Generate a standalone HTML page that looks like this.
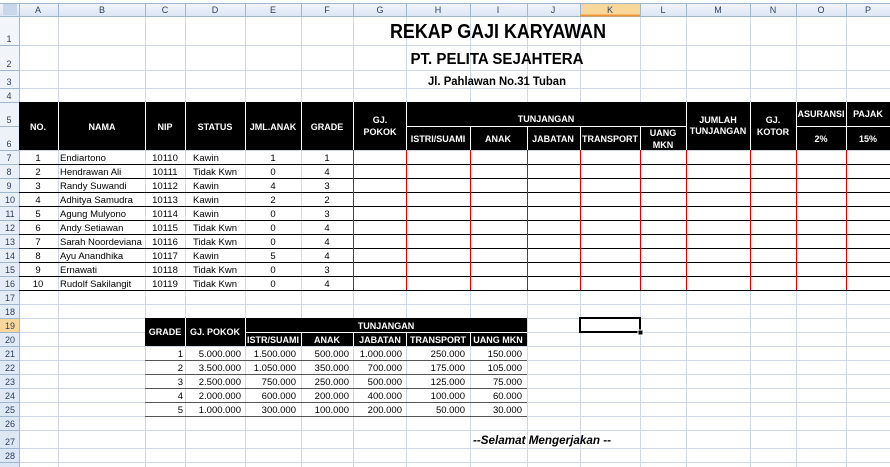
<!DOCTYPE html>
<html><head><meta charset="utf-8"><style>
html,body{margin:0;padding:0;background:#fff;width:890px;height:467px;overflow:hidden}
svg{display:block}
text{font-family:"Liberation Sans",sans-serif}
.h{font-size:9px;fill:#000;text-anchor:middle}
.d{font-size:9.5px;fill:#000}
.w{font-size:9px;fill:#fff;font-weight:bold;text-anchor:middle}
.c{text-anchor:middle}
.r{text-anchor:end}
</style></head><body>
<svg width="890" height="467" viewBox="0 0 890 467">
<defs><linearGradient id="hg" x1="0" y1="0" x2="0" y2="1"><stop offset="0" stop-color="#f3f6fb"/><stop offset="1" stop-color="#dce6f4"/></linearGradient></defs>
<rect x="0" y="0" width="890" height="467" fill="#fff"/>
<!-- gridlines -->
<g stroke="#d0d7e5" stroke-width="1">
<path d="M58.5 16V467M145.5 16V467M185.5 16V467M245.5 16V467M301.5 16V467M353.5 16V467M406.5 16V467M470.5 16V467M527.5 16V467M580.5 16V467M640.5 16V467M686.5 16V467M750.5 16V467M796.5 16V467M846.5 16V467"/>
<path d="M19 45.5H890M19 70.5H890M19 88.5H890M19 102.5H890M19 126.5H890M19 150.5H890M19 304.5H890M19 318.5H890M19 332.5H890M19 346.5H890M19 360.5H890M19 374.5H890M19 388.5H890M19 402.5H890M19 416.5H890M19 430.5H890M19 448.5H890M19 462.5H890"/>
</g>
<!-- headers -->
<rect x="0" y="3" width="890" height="13" fill="url(#hg)"/>
<rect x="0" y="16" width="19" height="451" fill="url(#hg)"/>
<rect x="580" y="3" width="60" height="13" fill="#f8d89a"/>
<rect x="0" y="318" width="19" height="14" fill="#f8d89a"/>
<g stroke="#9eb6ce" stroke-width="1">
<path d="M0 3.5H890M0 16.5H890M19.5 3V467"/>
<path d="M58.5 3V16M145.5 3V16M185.5 3V16M245.5 3V16M301.5 3V16M353.5 3V16M406.5 3V16M470.5 3V16M527.5 3V16M580.5 3V16M640.5 3V16M686.5 3V16M750.5 3V16M796.5 3V16M846.5 3V16"/>
<path d="M0 45.5H19M0 70.5H19M0 88.5H19M0 102.5H19M0 126.5H19M0 150.5H19M0 164.5H19M0 178.5H19M0 192.5H19M0 206.5H19M0 220.5H19M0 234.5H19M0 248.5H19M0 262.5H19M0 276.5H19M0 290.5H19M0 304.5H19M0 318.5H19M0 332.5H19M0 346.5H19M0 360.5H19M0 374.5H19M0 388.5H19M0 402.5H19M0 416.5H19M0 430.5H19M0 448.5H19M0 462.5H19"/>
</g>
<rect x="580" y="14.5" width="60" height="2" fill="#f29436"/>
<rect x="3" y="4" width="14" height="11" fill="#c9d7ea"/>
<g class="h" style="fill:#2c3e5a">
<text x="38" y="13">A</text><text x="102" y="13">B</text><text x="165" y="13">C</text><text x="215" y="13">D</text><text x="273" y="13">E</text><text x="327" y="13">F</text><text x="380" y="13">G</text><text x="438" y="13">H</text><text x="498" y="13">I</text><text x="553" y="13">J</text><text x="610" y="13">K</text><text x="663" y="13">L</text><text x="718" y="13">M</text><text x="773" y="13">N</text><text x="821" y="13">O</text><text x="868" y="13">P</text>
</g>
<g class="h" style="fill:#2c3e5a">
<text x="9" y="42">1</text><text x="9" y="67">2</text><text x="9" y="85">3</text><text x="9" y="99">4</text><text x="9" y="123">5</text><text x="9" y="147">6</text>
<text x="9" y="161">7</text><text x="9" y="175">8</text><text x="9" y="189">9</text><text x="10" y="203">10</text><text x="10" y="217">11</text><text x="10" y="231">12</text><text x="10" y="245">13</text><text x="10" y="259">14</text><text x="10" y="273">15</text><text x="10" y="287">16</text><text x="10" y="301">17</text><text x="10" y="315">18</text><text x="10" y="329">19</text><text x="10" y="343">20</text><text x="10" y="357">21</text><text x="10" y="371">22</text><text x="10" y="385">23</text><text x="10" y="399">24</text><text x="10" y="413">25</text><text x="10" y="427">26</text><text x="10" y="445">27</text><text x="10" y="459">28</text>
</g>
<!-- titles -->
<text x="498" y="38" class="c" font-weight="bold" font-size="20" textLength="216" lengthAdjust="spacingAndGlyphs">REKAP GAJI KARYAWAN</text>
<text x="497" y="64" class="c" font-weight="bold" font-size="16" textLength="173" lengthAdjust="spacingAndGlyphs">PT. PELITA SEJAHTERA</text>
<text x="497" y="85" class="c" font-weight="bold" font-size="11.5" textLength="138" lengthAdjust="spacingAndGlyphs">Jl. Pahlawan No.31 Tuban</text>
<!-- upper header -->
<rect x="19" y="102" width="871" height="48" fill="#000"/>
<g stroke="#fff" stroke-width="1">
<path d="M58.5 102V150M145.5 102V150M185.5 102V150M245.5 102V150M301.5 102V150M353.5 102V150M406.5 102V150M470.5 126V150M527.5 126V150M580.5 126V150M640.5 126V150M686.5 102V150M750.5 102V150M796.5 102V150M846.5 102V150"/>
<path d="M406 126.5H686M796 126.5H890"/>
</g>
<g class="w">
<text x="38" y="130">NO.</text><text x="102" y="130">NAMA</text><text x="165" y="130">NIP</text><text x="215" y="130">STATUS</text><text x="273" y="130">JML.ANAK</text><text x="327" y="130">GRADE</text>
<text x="380" y="123">GJ.</text><text x="380" y="135">POKOK</text>
<text x="546" y="122">TUNJANGAN</text>
<text x="438" y="142">ISTRI/SUAMI</text><text x="498" y="142">ANAK</text><text x="553" y="142">JABATAN</text><text x="610" y="142">TRANSPORT</text><text x="663" y="136">UANG</text><text x="663" y="148">MKN</text>
<text x="718" y="123">JUMLAH</text><text x="718" y="134">TUNJANGAN</text>
<text x="773" y="123">GJ.</text><text x="773" y="135">KOTOR</text>
<text x="821" y="117">ASURANSI</text><text x="821" y="142">2%</text>
<text x="868" y="117">PAJAK</text><text x="868" y="142">15%</text>
</g>
<!-- upper data lines -->
<g stroke="#000" stroke-width="1">
<path d="M19 164.5H890M19 178.5H890M19 192.5H890M19 206.5H890M19 220.5H890M19 234.5H890M19 248.5H890M19 262.5H890M19 276.5H890M19 290.5H890"/>
</g>
<g stroke="#e00000" stroke-width="1">
<path d="M353.5 150V290M406.5 150V290M470.5 150V290M527.5 150V290M580.5 150V290M640.5 150V290M686.5 150V290M750.5 150V290M796.5 150V290M846.5 150V290"/>
</g>
<g class="d">
<g class="c"><text x="38" y="161">1</text><text x="38" y="175">2</text><text x="38" y="189">3</text><text x="38" y="203">4</text><text x="38" y="217">5</text><text x="38" y="231">6</text><text x="38" y="245">7</text><text x="38" y="259">8</text><text x="38" y="273">9</text><text x="38" y="287">10</text></g>
<text x="60" y="161">Endiartono</text><text x="60" y="175">Hendrawan Ali</text><text x="60" y="189">Randy Suwandi</text><text x="60" y="203">Adhitya Samudra</text><text x="60" y="217">Agung Mulyono</text><text x="60" y="231">Andy Setiawan</text><text x="60" y="245">Sarah Noordeviana</text><text x="60" y="259">Ayu Anandhika</text><text x="60" y="273">Ernawati</text><text x="60" y="287">Rudolf Sakilangit</text>
<g class="c"><text x="165" y="161">10110</text><text x="165" y="175">10111</text><text x="165" y="189">10112</text><text x="165" y="203">10113</text><text x="165" y="217">10114</text><text x="165" y="231">10115</text><text x="165" y="245">10116</text><text x="165" y="259">10117</text><text x="165" y="273">10118</text><text x="165" y="287">10119</text></g>
<text x="193" y="161">Kawin</text><text x="193" y="175">Tidak Kwn</text><text x="193" y="189">Kawin</text><text x="193" y="203">Kawin</text><text x="193" y="217">Kawin</text><text x="193" y="231">Tidak Kwn</text><text x="193" y="245">Tidak Kwn</text><text x="193" y="259">Kawin</text><text x="193" y="273">Tidak Kwn</text><text x="193" y="287">Tidak Kwn</text>
<g class="c"><text x="273" y="161">1</text><text x="273" y="175">0</text><text x="273" y="189">4</text><text x="273" y="203">2</text><text x="273" y="217">0</text><text x="273" y="231">0</text><text x="273" y="245">0</text><text x="273" y="259">5</text><text x="273" y="273">0</text><text x="273" y="287">0</text></g>
<g class="c"><text x="327" y="161">1</text><text x="327" y="175">4</text><text x="327" y="189">3</text><text x="327" y="203">2</text><text x="327" y="217">3</text><text x="327" y="231">4</text><text x="327" y="245">4</text><text x="327" y="259">4</text><text x="327" y="273">3</text><text x="327" y="287">4</text></g>
</g>
<!-- lower table -->
<rect x="145" y="318" width="382" height="28" fill="#000"/>
<g stroke="#fff" stroke-width="1"><path d="M185.5 318V346M245.5 318V346M301.5 332V346M353.5 332V346M406.5 332V346M470.5 332V346M245 332.5H527"/></g>
<g class="w">
<text x="165" y="335">GRADE</text><text x="215" y="335">GJ. POKOK</text><text x="386" y="329">TUNJANGAN</text>
<text x="273" y="343">ISTR/SUAMI</text><text x="327" y="343">ANAK</text><text x="380" y="343">JABATAN</text><text x="438" y="343">TRANSPORT</text><text x="498" y="343">UANG MKN</text>
</g>
<g stroke="#555" stroke-width="1"><path d="M145 360.5H527M145 374.5H527M145 388.5H527M145 402.5H527M145 416.5H527"/></g>
<g class="d r">
<text x="183" y="357">1</text><text x="183" y="371">2</text><text x="183" y="385">3</text><text x="183" y="399">4</text><text x="183" y="413">5</text>
<text x="241" y="357">5.000.000</text><text x="241" y="371">3.500.000</text><text x="241" y="385">2.500.000</text><text x="241" y="399">2.000.000</text><text x="241" y="413">1.000.000</text>
<text x="296" y="357">1.500.000</text><text x="296" y="371">1.050.000</text><text x="296" y="385">750.000</text><text x="296" y="399">600.000</text><text x="296" y="413">300.000</text>
<text x="349" y="357">500.000</text><text x="349" y="371">350.000</text><text x="349" y="385">250.000</text><text x="349" y="399">200.000</text><text x="349" y="413">100.000</text>
<text x="402" y="357">1.000.000</text><text x="402" y="371">700.000</text><text x="402" y="385">500.000</text><text x="402" y="399">400.000</text><text x="402" y="413">200.000</text>
<text x="465" y="357">250.000</text><text x="465" y="371">175.000</text><text x="465" y="385">125.000</text><text x="465" y="399">100.000</text><text x="465" y="413">50.000</text>
<text x="522" y="357">150.000</text><text x="522" y="371">105.000</text><text x="522" y="385">75.000</text><text x="522" y="399">60.000</text><text x="522" y="413">30.000</text>
</g>
<text x="473" y="444" font-size="12" font-weight="bold" font-style="italic" textLength="138" lengthAdjust="spacingAndGlyphs">--Selamat Mengerjakan --</text>
<!-- selection -->
<rect x="580" y="318" width="60" height="14" fill="none" stroke="#000" stroke-width="2"/>
<rect x="638" y="330" width="5" height="5" fill="#000" stroke="#fff" stroke-width="1"/>
</svg>
</body></html>
